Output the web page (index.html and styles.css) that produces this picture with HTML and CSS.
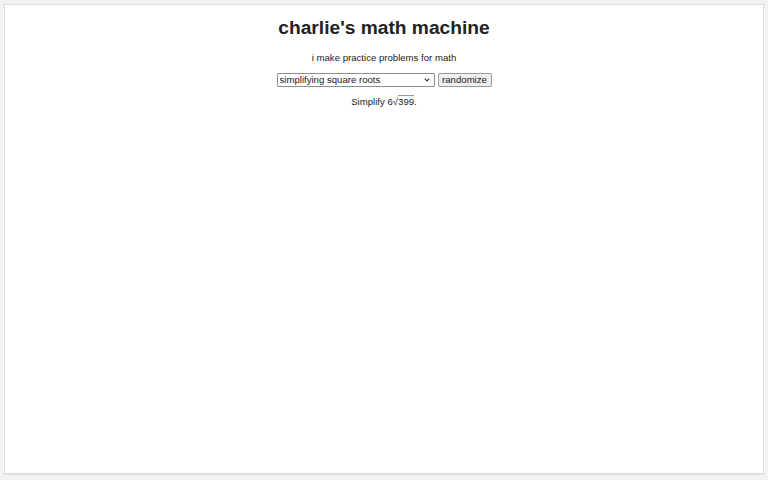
FILE: index.html
```
<!DOCTYPE html>
<html>
<head>
<meta charset="utf-8">
<link rel="stylesheet" href="styles.css">
</head>
<body>
<div class="page">
  <h1 class="title">charlie's math machine</h1>
  <p class="tagline">i make practice problems for math</p>
  <p class="controls">
    <span class="select-wrap">
      <select class="picker">
        <option>simplifying square roots</option>
      </select>
      <svg class="chev" width="6" height="4" viewBox="0 0 6 4"><path d="M0.7 0.7 L3 3 L5.3 0.7" fill="none" stroke="#333" stroke-width="1.1"/></svg>
    </span>
    <button class="btn">randomize</button>
  </p>
  <p class="problem">Simplify 6√<span class="radicand">399</span>.</p>
</div>
</body>
</html>
```
FILE: styles.css
```
html, body {
  margin: 0;
  padding: 0;
}
body {
  background: #f2f2f2;
  font-family: "Liberation Sans", Arial, sans-serif;
  font-size: 9.6px;
  color: #222;
  padding: 4px;
}
.page {
  background: #fff;
  border: 1px solid #dcdcdc;
  box-shadow: 0 1px 1px rgba(0,0,0,0.06);
  min-height: 470px;
  box-sizing: border-box;
  text-align: center;
  padding: 0.1px 0;
}
.title {
  font-size: 19.2px;
  font-weight: bold;
  margin: 12px 0 12.9px;
  color: #222;
}
.tagline {
  margin: 9.6px 0;
}
.controls {
  margin: 9.6px 0;
  display: flex;
  justify-content: center;
  align-items: center;
  gap: 3px;
}
.select-wrap {
  position: relative;
  display: inline-flex;
}
.picker {
  appearance: none;
  -webkit-appearance: none;
  width: 158px;
  height: 14px;
  font-family: "Liberation Sans", Arial, sans-serif;
  font-size: 9.6px;
  line-height: 12px;
  padding: 0 0 0 2px;
  border: 1px solid #8f8f8f;
  border-radius: 1px;
  background: #fff;
  color: #222;
  text-align: left;
}
.chev {
  position: absolute;
  right: 5px;
  top: 5px;
  pointer-events: none;
}
.btn {
  height: 14px;
  width: 54px;
  font-family: "Liberation Sans", Arial, sans-serif;
  font-size: 9.6px;
  line-height: 12px;
  padding: 0 2px;
  border: 1px solid #9a9a9a;
  border-radius: 2px;
  background: #efefef;
  color: #222;
}
.problem {
  margin: 9.6px 0;
}
.radicand {
  border-top: 1px solid #999;
  padding-top: 0;
}
```
